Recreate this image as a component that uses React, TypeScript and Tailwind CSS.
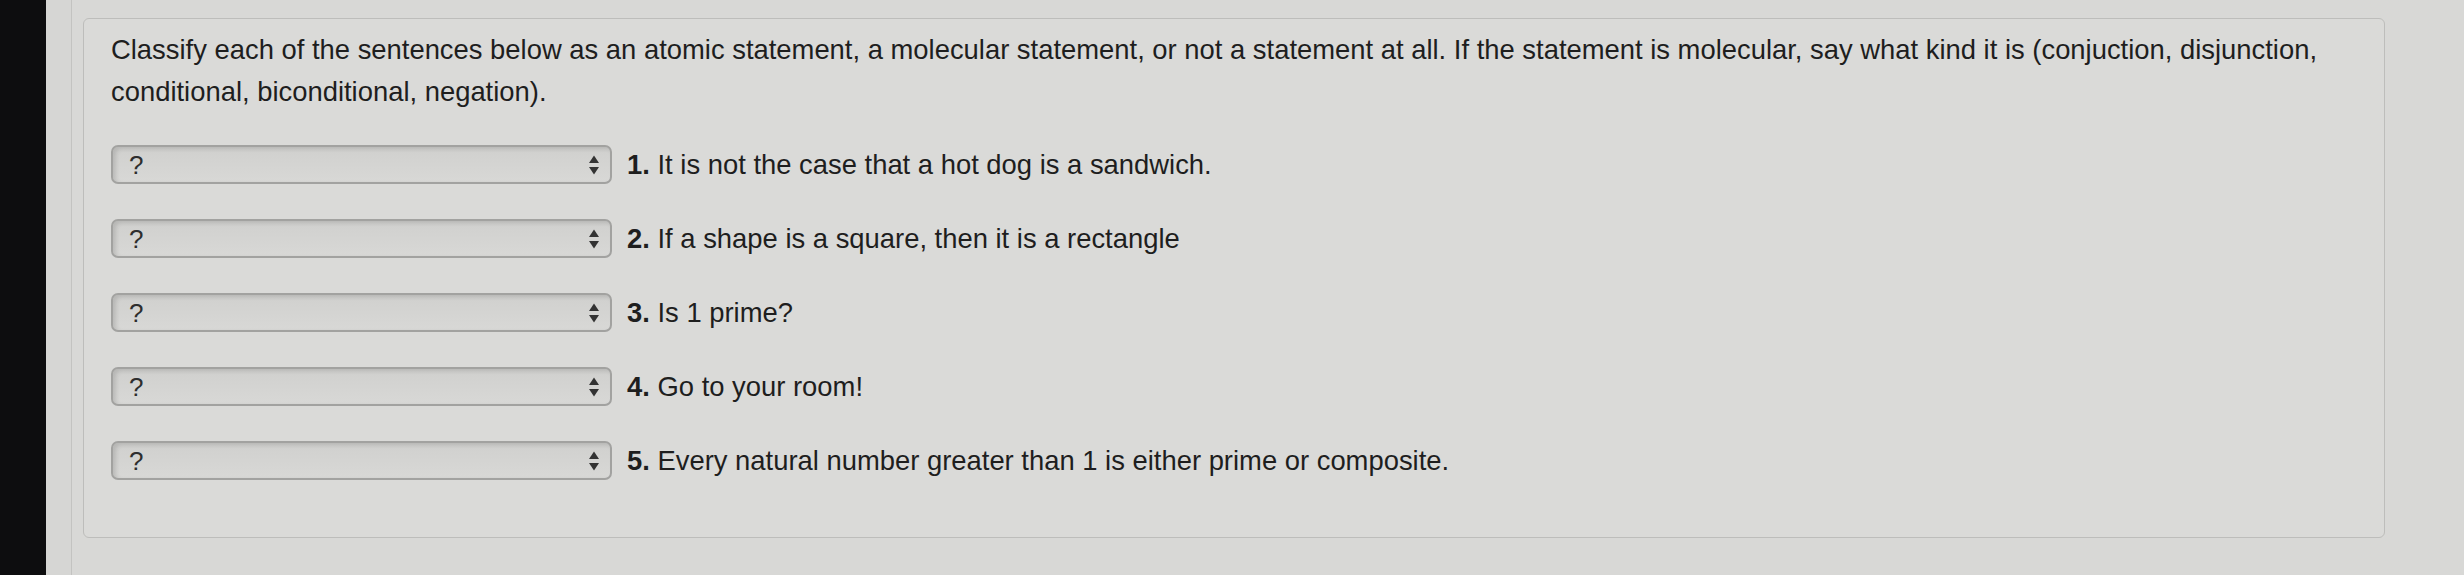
const sentences = [
  'It is not the case that a hot dog is a sandwich.',
  'If a shape is a square, then it is a rectangle',
  'Is 1 prime?',
  'Go to your room!',
  'Every natural number greater than 1 is either prime or composite.',
];

function Stepper() {
  return (
    <svg width="12" height="22" viewBox="0 0 12 22" className="shrink-0">
      <path d="M6 1.5 L11 9 L1 9 Z" fill="#333333" />
      <path d="M6 20.5 L11 13 L1 13 Z" fill="#333333" />
    </svg>
  );
}

function ChoiceSelect() {
  return (
    <div className="w-[501px] h-[39px] shrink-0 rounded-[7px] border-[2px] border-[#a2a2a0] bg-gradient-to-b from-[#d0d0ce] to-[#d8d8d6] shadow-[inset_3px_2px_4px_rgba(0,0,0,0.13)] flex items-center justify-between pl-[16px] pr-[10px]">
      <span className="text-[26px] leading-none text-[#2e2e2e]">?</span>
      <Stepper />
    </div>
  );
}

export default function App() {
  return (
    <div className="w-[2464px] h-[575px] overflow-hidden flex bg-[#d8d8d6] font-['Liberation_Sans',Arial,sans-serif] text-[#1e1e1e]">
      <div className="w-[46px] h-full bg-[#0d0d0f] shrink-0"></div>
      <div className="w-[26px] h-full border-r border-[#c3c3c1] bg-[#d6d6d4] shrink-0"></div>
      <div className="pl-[11px] pt-[18px]">
        <div className="w-[2302px] h-[520px] rounded-[6px] border border-[#bdbdbb] bg-[#dadad8] pl-[27px] pr-[28px] pt-[10px]">
          <p className="text-[27.4px] leading-[42px]">
            Classify each of the sentences below as an atomic statement, a molecular statement, or not a statement at all. If the statement is molecular, say what kind it is (conjuction, disjunction, conditional, biconditional, negation).
          </p>

          <div className="mt-[32px] flex flex-col gap-[35px]">
            {sentences.map((s, i) => (
              <div key={i} className="flex items-center gap-[15px]">
                <ChoiceSelect />
                <div className="text-[27.4px] leading-none">
                  <span className="font-bold">{i + 1}.</span> {s}
                </div>
              </div>
            ))}
          </div>
        </div>
      </div>
    </div>
  );
}
